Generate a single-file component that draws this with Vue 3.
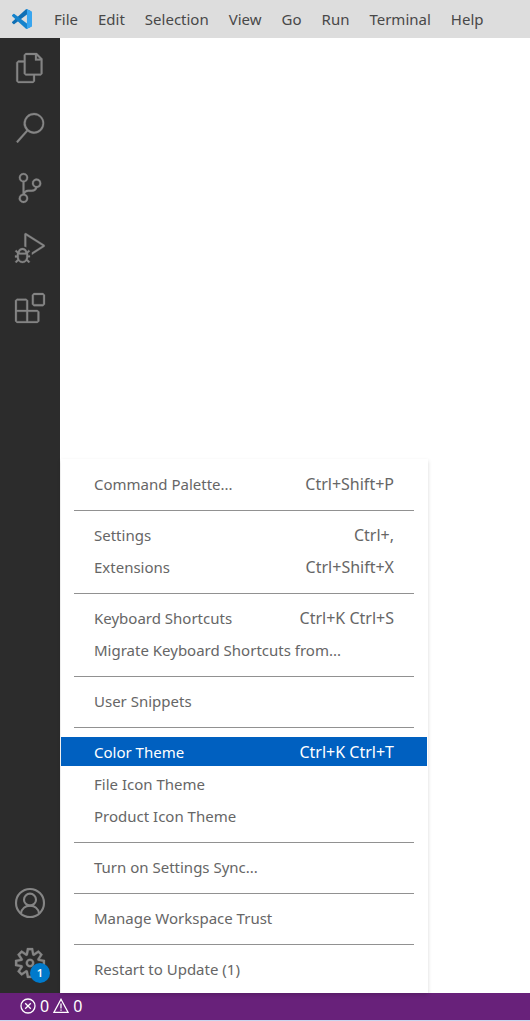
<script setup>
const menus = ['File', 'Edit', 'Selection', 'View', 'Go', 'Run', 'Terminal', 'Help']

const views = [
  {
    name: 'Explorer',
    path: 'M17.5 0h-9L7 1.5V6H2.5L1 7.5v15.07L2.5 24h12.07L16 22.57V18h4.7l1.3-1.43V4.5L17.5 0zm0 2.12l2.38 2.38H17.5V2.12zm-3 20.38h-12v-15H7v9.07L8.5 18h6v4.5zm6-6h-12v-15H16V6h4.5v10.5z'
  },
  {
    name: 'Search',
    path: 'M15.25 0a8.25 8.25 0 0 0-6.18 13.72L1 22.88l1.12 1.12 8.05-9.12A8.251 8.251 0 1 0 15.25.01V0zm0 15a6.75 6.75 0 1 1 0-13.5 6.75 6.75 0 0 1 0 13.5z'
  },
  {
    name: 'Source Control',
    path: 'M21.007 8.222A3.738 3.738 0 0 0 15.045 5.2a3.737 3.737 0 0 0 1.156 6.583 2.988 2.988 0 0 1-2.668 1.67h-2.99a4.456 4.456 0 0 0-2.989 1.165V7.4a3.737 3.737 0 1 0-1.494 0v9.117a3.776 3.776 0 1 0 1.816.099 2.99 2.99 0 0 1 2.668-1.667h2.99a4.484 4.484 0 0 0 4.223-3.039 3.736 3.736 0 0 0 3.25-3.687zM4.565 3.738a2.242 2.242 0 1 1 4.484 0 2.242 2.242 0 0 1-4.484 0zm4.484 16.441a2.242 2.242 0 1 1-4.484 0 2.242 2.242 0 0 1 4.484 0zm8.221-9.715a2.242 2.242 0 1 1 0-4.485 2.242 2.242 0 0 1 0 4.485z'
  },
  {
    name: 'Run and Debug',
    path: 'M10.94 13.5l-1.32 1.32a3.73 3.73 0 0 0-7.24 0L1.06 13.5 0 14.56l1.72 1.72-.22.22V18H0v1.5h1.5v.08c.077.489.214.966.41 1.42L0 22.94 1.06 24l1.65-1.65A4.308 4.308 0 0 0 6 24a4.31 4.31 0 0 0 3.29-1.65L10.94 24 12 22.94 10.09 21c.198-.464.336-.951.41-1.45v-.1H12V18h-1.5v-1.5l-.22-.22L12 14.56l-1.06-1.06zM6 13.5a2.25 2.25 0 0 1 2.25 2.25h-4.5A2.25 2.25 0 0 1 6 13.5zm3 6a3.33 3.33 0 0 1-3 3 3.33 3.33 0 0 1-3-3v-2.25h6v2.25zm14.76-9.9v1.26L13.5 17.37V15.6l8.5-5.37L9 2v9.46a5.07 5.07 0 0 0-1.5-.72V.63L8.64 0l15.12 9.6z'
  },
  {
    name: 'Extensions',
    path: 'M13.5 1.5L15 0h7.5L24 1.5V9l-1.5 1.5H15L13.5 9V1.5zm1.5 0V9h7.5V1.5H15zM0 15V6l1.5-1.5H9L10.5 6v7.5H18l1.5 1.5v7.5L18 24H1.5L0 22.5V15zm9-1.5V6H1.5v7.5H9zM9 15H1.5v7.5H9V15zm1.5 7.5H18V15h-7.5v7.5z'
  }
]

const groups = [
  [{ label: 'Command Palette...', keys: 'Ctrl+Shift+P' }],
  [
    { label: 'Settings', keys: 'Ctrl+,' },
    { label: 'Extensions', keys: 'Ctrl+Shift+X' }
  ],
  [
    { label: 'Keyboard Shortcuts', keys: 'Ctrl+K Ctrl+S' },
    { label: 'Migrate Keyboard Shortcuts from...' }
  ],
  [{ label: 'User Snippets' }],
  [
    { label: 'Color Theme', keys: 'Ctrl+K Ctrl+T', active: true },
    { label: 'File Icon Theme' },
    { label: 'Product Icon Theme' }
  ],
  [{ label: 'Turn on Settings Sync...' }],
  [{ label: 'Manage Workspace Trust' }],
  [{ label: 'Restart to Update (1)' }]
]
</script>

<template>
  <div class="window">
    <header class="titlebar">
      <svg class="logo" viewBox="0 0 100 100" aria-hidden="true">
        <path fill="#0f6fb5" d="M96 11 75.500 1.200a6.200 6.200 0 0 0-7.100 1.200L1.300 63.500a4.200 4.200 0 0 0 0 6.200l5.500 5a4.200 4.200 0 0 0 5.300.2L93 13.600c2.700-2 6.600-.1 6.600 3.300v-.2A6.300 6.300 0 0 0 96 11z" />
        <path fill="#1583cc" d="M96 89 75.500 98.800a6.200 6.200 0 0 1-7.100-1.200L1.300 36.500a4.200 4.200 0 0 1 0-6.200l5.500-5a4.200 4.200 0 0 1 5.300-.2L93 86.400c2.700 2 6.600.1 6.600-3.300v.2A6.300 6.300 0 0 1 96 89z" />
        <path fill="#37a5ef" d="M75.500 98.800a6.200 6.200 0 0 1-7.100-1.200c2.300 2.300 6.300.7 6.300-2.600V5c0-3.300-4-4.900-6.300-2.600a6.200 6.200 0 0 1 7.100-1.200L96 11a6.300 6.300 0 0 1 4 5.700v66.600a6.300 6.300 0 0 1-4 5.700z" />
      </svg>
      <nav class="menubar">
        <button v-for="m in menus" :key="m" type="button">{{ m }}</button>
      </nav>
    </header>

    <div class="body">
      <aside class="activity">
        <div class="stack">
          <button v-for="v in views" :key="v.name" type="button" :aria-label="v.name">
            <svg viewBox="0 0 24 24"><path :d="v.path" /></svg>
          </button>
        </div>
        <div class="stack">
          <button type="button" aria-label="Accounts">
            <svg class="line" viewBox="0 0 24 24">
              <circle cx="12" cy="12" r="11.200" />
              <circle cx="12" cy="9.300" r="4.800" />
              <path d="M4.800 20.200c.6-3.600 3.500-6.100 7.200-6.100s6.600 2.500 7.200 6.100" />
            </svg>
          </button>
          <button type="button" aria-label="Manage">
            <svg viewBox="0 0 24 24">
              <path fill-rule="evenodd" d="M19.85 8.75l4.15.83v4.84l-4.15.83 2.35 3.52-3.43 3.43-3.52-2.35-.83 4.15H9.58l-.83-4.15-3.52 2.35-3.43-3.43 2.35-3.52L0 14.42V9.58l4.15-.83L1.8 5.23 5.23 1.8l3.52 2.35L9.58 0h4.84l.83 4.15 3.52-2.35 3.43 3.43-2.35 3.52zm-1.57 5.07l4-.81v-2l-4-.81-.54-1.3 2.29-3.43-1.43-1.43-3.43 2.29-1.3-.54-.81-4h-2l-.81 4-1.3.54-3.43-2.29-1.43 1.43L6.380 8.900l-.54 1.3-4 .81v2l4 .81.54 1.3-2.29 3.43 1.43 1.43 3.43-2.29 1.3.54.81 4h2l.81-4 1.3-.54 3.43 2.29 1.43-1.43-2.29-3.43.54-1.3zM12 8.570a3.430 3.430 0 1 1 0 6.860a3.430 3.430 0 0 1 0-6.860zm0 1.720a1.710 1.710 0 1 0 0 3.420a1.710 1.710 0 0 0 0-3.420z" />
            </svg>
            <span class="badge">1</span>
          </button>
        </div>
      </aside>

      <main class="editor">
        <div class="menu" role="menu">
          <template v-for="(group, i) in groups" :key="i">
            <hr v-if="i" />
            <button
              v-for="item in group"
              :key="item.label"
              type="button"
              role="menuitem"
              :class="{ active: item.active }"
            >
              <span>{{ item.label }}</span>
              <span v-if="item.keys" class="keys">{{ item.keys }}</span>
            </button>
          </template>
        </div>
      </main>
    </div>

    <footer class="status">
      <button type="button" aria-label="0 errors, 0 warnings">
        <svg viewBox="0 0 16 16">
          <circle cx="8" cy="8" r="7" />
          <path d="M5.200 5.200l5.600 5.600M10.800 5.200l-5.600 5.600" />
        </svg>
        <span>0</span>
        <svg viewBox="0 0 16 16">
          <path d="M8 1.300 15 14.300H1z" />
          <path d="M8 5.500v5M8 11.500v1.300" />
        </svg>
        <span>0</span>
      </button>
    </footer>
  </div>
</template>

<style>
body {
  margin: 0;
}
</style>

<style scoped>
.window {
  display: flex;
  flex-direction: column;
  min-height: 100vh;
  background: #fff;
  font-family: "Noto Sans", "Open Sans", sans-serif;
  font-size: 15px;
  line-height: 20px;
}

button {
  margin: 0;
  padding: 0;
  border: 0;
  background: none;
  color: inherit;
  font: inherit;
}

.titlebar {
  display: flex;
  align-items: center;
  height: 38px;
  padding-left: 12px;
  gap: 12px;
  background: #ddd;
  color: #484848;
}

.logo {
  width: 20px;
  height: 20px;
}

.menubar {
  display: flex;
}

.menubar button {
  padding: 0 10px;
}

.body {
  display: flex;
  flex: 1;
}

.activity {
  display: flex;
  flex-direction: column;
  justify-content: space-between;
  width: 60px;
  background: #2c2c2c;
}

.stack {
  display: flex;
  flex-direction: column;
}

.stack button {
  position: relative;
  display: flex;
  align-items: center;
  justify-content: center;
  height: 60px;
}

.stack svg {
  width: 30px;
  height: 30px;
  overflow: visible;
  fill: #858585;
  stroke: #858585;
  stroke-width: 0.2;
}

.stack .line {
  fill: none;
  stroke-width: 1.7;
}

.badge {
  position: absolute;
  right: 10px;
  bottom: 10px;
  width: 20px;
  height: 20px;
  border-radius: 50%;
  background: #007acc;
  color: #fff;
  font-size: 11px;
  font-weight: 600;
  text-align: center;
}

.editor {
  position: relative;
  flex: 1;
}

.menu {
  position: absolute;
  left: 1px;
  bottom: 0;
  display: flex;
  flex-direction: column;
  box-sizing: border-box;
  width: 367px;
  padding: 9px 1px 8px 0;
  background: #fff;
  color: #666;
  box-shadow: 0 2px 4px rgba(0, 0, 0, 0.16);
}

.menu button {
  display: flex;
  align-items: center;
  justify-content: space-between;
  height: 29px;
  margin: 1px 0 2px;
  padding: 0 33px;
}

.menu .active {
  background: #0060c0;
  color: #fff;
}

.keys {
  font-size: 16px;
}

.menu hr {
  align-self: stretch;
  height: 1px;
  margin: 10px 13px 8px;
  border: 0;
  background: #919191;
}

.status {
  display: flex;
  height: 26px;
  padding: 0 20px 1px;
  border-bottom: 1px solid #ccd5f0;
  background: #68217a;
  color: #fff;
  font-size: 16px;
}

.status button {
  display: flex;
  align-items: center;
  gap: 4px;
}

.status svg {
  width: 16px;
  height: 16px;
  fill: none;
  stroke: #fff;
  stroke-width: 1.3;
}
</style>
